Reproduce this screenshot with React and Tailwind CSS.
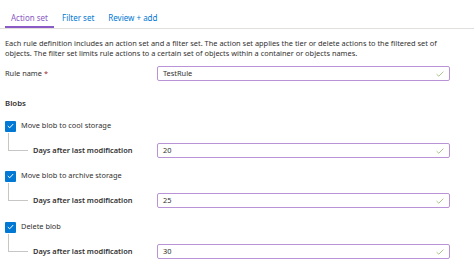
import React from 'react';

const font = { fontFamily: '"Noto Sans", "Open Sans", Arial, sans-serif' };

const Check = () => (
    <svg width="8" height="6" viewBox="0 0 8 6" className="shrink-0">
        <path d="M0.6 3.2 L2.8 5.2 L7.4 0.6" fill="none" stroke="#9fbf7f" strokeWidth="0.9" />
    </svg>
);

const TextBox = ({ value }) => (
    <div className="w-[293px] h-[15px] border border-[#b993d6] rounded-[2px] flex items-center justify-between pl-[5px] pr-[5px] text-[7.4px] text-[#323130]">
        <span>{value}</span>
        <Check />
    </div>
);

const Checkbox = ({ label, className }) => (
    <div className={`flex items-center h-[12px] pl-[5px] ${className}`}>
        <div className="w-[11px] h-[11px] bg-[#0078d4] rounded-[1px] flex items-center justify-center">
            <svg width="7" height="6" viewBox="0 0 7 6">
                <path d="M0.8 3 L2.7 4.8 L6.2 1" fill="none" stroke="#ffffff" strokeWidth="1" />
            </svg>
        </div>
        <span className="ml-[5px] text-[7.4px] text-[#323130]">{label}</span>
    </div>
);

const DaysRow = ({ value, className }) => (
    <div className={`flex items-center h-[15px] ${className}`}>
        <div className="self-start -mt-[10px] ml-[8px] w-[20px] h-[18px] border-l border-b border-[#c8c6c4]" />
        <div className="w-[129px] pl-[5px] text-[7.4px] font-semibold text-[#323130]">Days after last modification</div>
        <TextBox value={value} />
    </div>
);

const App = () => {
    return (
        <div className="w-[474px] h-[273px] bg-white overflow-hidden" style={font}>
            <div className="flex h-[29px] border-b border-[#e1dfdd] pl-[5px] gap-[2px]">
                <div className="pt-[12px] h-[28px] px-[6px] border-b-2 border-[#8a5bc4] text-[8px] leading-[12px] text-[#8a5bc4]">Action set</div>
                <div className="pt-[12px] h-[28px] px-[6px] text-[8px] leading-[12px] text-[#0078d4]">Filter set</div>
                <div className="pt-[12px] h-[28px] px-[6px] text-[8px] leading-[12px] text-[#0078d4]">Review + add</div>
            </div>

            <p className="mt-[9px] pl-[5px] pr-[20px] text-[7.4px] leading-[10px] text-[#323130]">
                Each rule definition includes an action set and a filter set. The action set applies the tier or delete actions to the filtered set of objects. The filter set limits rule actions to a certain set of objects within a container or objects names.
            </p>

            <div className="mt-[8px] flex items-center h-[15px] pl-[5px]">
                <div className="w-[152px] text-[7.4px] text-[#323130]">
                    Rule name <span className="text-[#a4262c]">*</span>
                </div>
                <TextBox value="TestRule" />
            </div>

            <div className="mt-[16px] pl-[5px] h-[12px] leading-[12px] text-[7.8px] font-semibold text-[#323130]">Blobs</div>

            <Checkbox label="Move blob to cool storage" className="mt-[11px]" />
            <DaysRow value="20" className="mt-[11px]" />
            <Checkbox label="Move blob to archive storage" className="mt-[12px]" />
            <DaysRow value="25" className="mt-[11px]" />
            <Checkbox label="Delete blob" className="mt-[13px]" />
            <DaysRow value="30" className="mt-[11px]" />
        </div>
    );
};

export default App;
